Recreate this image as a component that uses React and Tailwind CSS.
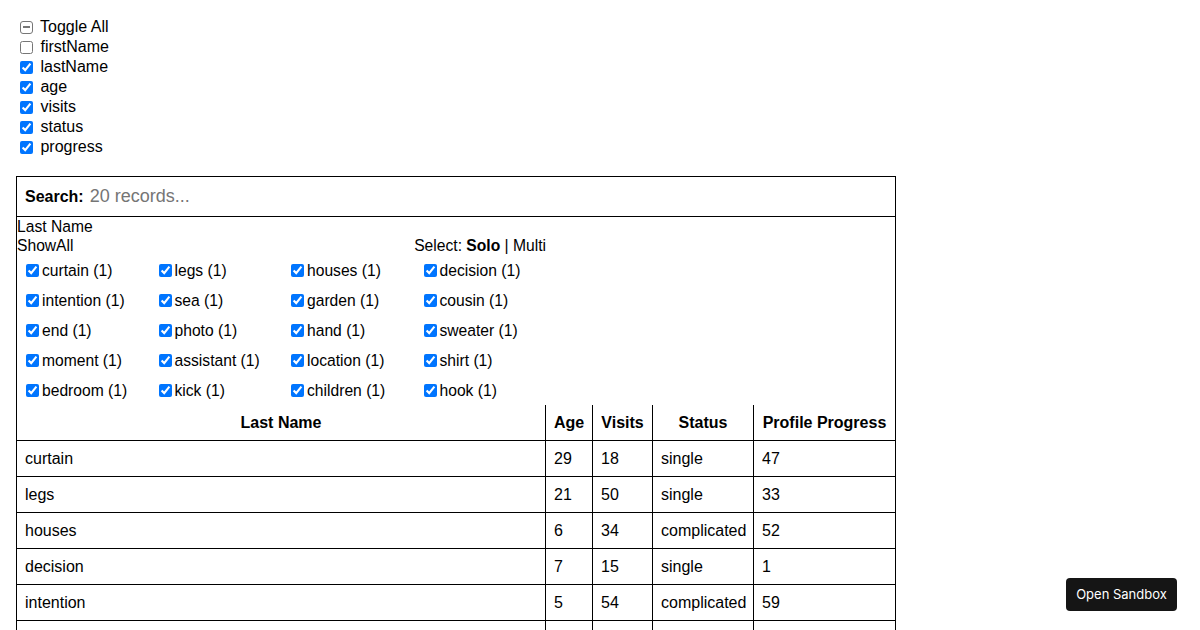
import React from "react";

const names = [
  "curtain", "legs", "houses", "decision",
  "intention", "sea", "garden", "cousin",
  "end", "photo", "hand", "sweater",
  "moment", "assistant", "location", "shirt",
  "bedroom", "kick", "children", "hook",
];

const rows = [
  ["curtain", 29, 18, "single", 47],
  ["legs", 21, 50, "single", 33],
  ["houses", 6, 34, "complicated", 52],
  ["decision", 7, 15, "single", 1],
  ["intention", 5, 54, "complicated", 59],
  ["sea", 12, 41, "relationship", 20],
  ["garden", 33, 9, "single", 76],
];

const cols = ["firstName", "lastName", "age", "visits", "status", "progress"];

const grid = "grid grid-cols-[528px_47px_60px_101px_142px]";

export default function App() {
  return (
    <div className="h-screen overflow-hidden bg-white px-4 pt-[17px] text-base text-black" style={{ fontFamily: '"Liberation Sans", Arial, sans-serif' }}>
      <div className="leading-5">
        <div className="flex h-5 items-center">
          <span className="ml-1 mr-[7px] flex h-[13px] w-[13px] items-center justify-center rounded-[3px] border border-[#767676] bg-white">
            <span className="h-[2px] w-[7px] bg-[#767676]" />
          </span>
          <span>Toggle All</span>
        </div>
        {cols.map((c) => (
          <div key={c} className="h-5">
            <label>
              <input type="checkbox" defaultChecked={c !== "firstName"} className="m-0 ml-1 mr-[3px] h-[13px] w-[13px] align-[-2px]" /> {c}
            </label>
          </div>
        ))}
      </div>

      <div className="mt-[19px] w-[880px] border border-black">
        <div className="flex h-10 items-center border-b border-black pl-2">
          <span className="font-bold">Search:</span>
          <input className="ml-[6px] flex-1 text-[18px] outline-none placeholder:text-[#757575]" placeholder="20 records..." />
        </div>

        <div className="text-[15.65px] leading-[19px]">
          <div className="h-[19px]">Last Name</div>
          <div className="flex h-[19px] w-[529px] justify-between">
            <span>ShowAll</span>
            <span>
              Select: <b>Solo</b> | Multi
            </span>
          </div>
          <div className="ml-[5px] grid w-[530px] grid-cols-4">
            {names.map((n) => (
              <label key={n} className="flex h-[30px] items-center">
                <input type="checkbox" defaultChecked className="m-0 ml-1 mr-[3px] h-[13px] w-[13px]" />
                <span>{n} (1)</span>
              </label>
            ))}
          </div>
        </div>

        <div className={`${grid} h-[35px] font-bold leading-[19px]`}>
          {["Last Name", "Age", "Visits", "Status", "Profile Progress"].map((h, i) => (
            <div key={h} className={`flex items-center justify-center px-2 ${i > 0 ? "border-l border-black" : ""}`}>
              {h}
            </div>
          ))}
        </div>
        {rows.map((r) => (
          <div key={r[0]} className={`${grid} h-9 border-t border-black leading-[19px]`}>
            {r.map((v, i) => (
              <div key={i} className={`flex items-center px-2 ${i > 0 ? "border-l border-black" : ""}`}>
                {v}
              </div>
            ))}
          </div>
        ))}
      </div>

      <button className="fixed bottom-[19px] right-[23px] h-[33px] w-[111px] rounded-[4px] bg-[#151515] text-[13px] text-white" style={{ fontFamily: 'Inter, "Liberation Sans", sans-serif' }}>
        Open Sandbox
      </button>
    </div>
  );
}
